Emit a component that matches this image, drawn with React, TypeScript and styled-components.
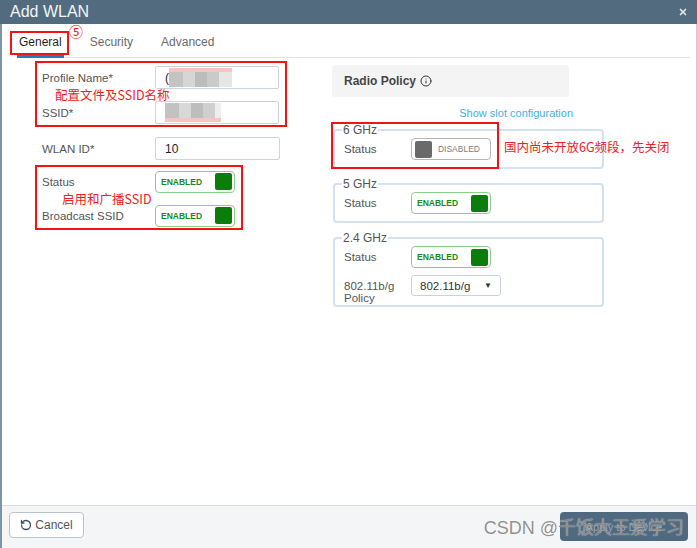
import React from "react";
import styled, { createGlobalStyle } from "styled-components";
import { RotateCcw, X, Info } from "lucide-react";

const Global = createGlobalStyle`
  html, body { margin: 0; padding: 0; background: #fff; }
  body { font-family: "Liberation Sans", Arial, "Noto Sans CJK SC", sans-serif; }
  * { box-sizing: border-box; }
`;

const Dialog = styled.div`
  width: 697px;
  height: 548px;
  display: flex;
  flex-direction: column;
  position: relative;
  overflow: hidden;
`;

const Header = styled.div`
  height: 24px;
  flex: none;
  background: #526b7e;
  display: flex;
  align-items: center;
  justify-content: space-between;
  padding: 0 9px 0 10px;
  color: #f2f5f7;
  font-size: 16px;
`;

const CloseBtn = styled.span`
  display: flex;
  align-items: center;
  color: #e4e9ed;
`;

const Frame = styled.div`
  flex: 1;
  display: flex;
  flex-direction: column;
  border-left: 2px solid #7e94a9;
  border-right: 1px solid #c6cfd8;
  min-height: 0;
`;

const Body = styled.div`
  flex: 1;
  padding: 0 6px 0 15px;
`;

const Tabs = styled.div`
  height: 34px;
  display: flex;
  gap: 24px;
  border-bottom: 1px solid #dde2e6;
`;

const Tab = styled.div<{ $active?: boolean }>`
  position: relative;
  height: 34px;
  padding: 4px 2px 0;
  display: flex;
  align-items: center;
  font-size: 12px;
  color: ${(p) => (p.$active ? "#1f1f1f" : "#6a6a6a")};
  border-bottom: 3px solid ${(p) => (p.$active ? "#1d7fc1" : "transparent")};
  margin-bottom: -1px;
`;

const TabMark = styled.div`
  position: absolute;
  left: -7px;
  top: 7px;
  width: 59px;
  height: 24px;
  border: 2px solid #f01414;
`;

const Circled = styled.span`
  position: absolute;
  left: 52px;
  top: -1px;
  font-family: "Noto Sans CJK SC", "DejaVu Sans", sans-serif;
  font-size: 14px;
  line-height: 16px;
  color: #f01414;
`;

const Columns = styled.div`
  display: flex;
  padding-top: 3px;
`;

const LeftCol = styled.div`
  margin-left: 18px;
  width: 252px;
  display: flex;
  flex-direction: column;
`;

const RedBox = styled.div<{ $w: number; $top?: number }>`
  width: ${(p) => p.$w}px;
  margin-top: ${(p) => p.$top ?? 0}px;
  border: 2px solid #f01414;
  padding: 3px 6px 1px 5px;
`;

const Row = styled.div<{ $indent?: number; $top?: number }>`
  display: flex;
  align-items: center;
  height: 23px;
  margin-top: ${(p) => p.$top ?? 0}px;
  padding-left: ${(p) => p.$indent ?? 0}px;
`;

const Label = styled.div<{ $w?: number }>`
  width: ${(p) => p.$w ?? 113}px;
  flex: none;
  font-size: 11.5px;
  color: #555;
`;

const Note = styled.div<{ $h: number; $indent: number }>`
  height: ${(p) => p.$h}px;
  line-height: ${(p) => p.$h}px;
  padding-left: ${(p) => p.$indent}px;
  font-family: "Noto Sans CJK SC", sans-serif;
  font-size: 12.5px;
  color: #f02020;
  white-space: nowrap;
`;

const TextBox = styled.div`
  width: 125px;
  height: 23px;
  border: 1px solid #c9d6e0;
  border-radius: 2px;
  display: flex;
  align-items: center;
  padding-left: 9px;
  font-size: 12px;
  color: #222;
`;

const Mosaic = styled.div<{ $pink: "top" | "bottom" }>`
  display: flex;
  height: 19px;
  border-${(p) => p.$pink}: 4px solid #f7c3c3;
`;

const Tile = styled.span<{ $c: string; $w: number }>`
  display: block;
  width: ${(p) => p.$w}px;
  height: 100%;
  background: ${(p) => p.$c};
`;

const Toggle = styled.div<{ $on: boolean }>`
  width: 80px;
  height: 22px;
  border: 1.5px solid ${(p) => (p.$on ? "#8ccf8c" : "#b6b6b6")};
  border-radius: 4px;
  display: flex;
  align-items: center;
  flex-direction: ${(p) => (p.$on ? "row" : "row-reverse")};
  justify-content: space-between;
  padding: 0 2px 0 ${(p) => (p.$on ? 5 : 3)}px;
  background: #fff;
`;

const ToggleText = styled.span<{ $on: boolean }>`
  font-size: 8.5px;
  font-weight: ${(p) => (p.$on ? 700 : 400)};
  color: ${(p) => (p.$on ? "#1a8a1a" : "#7e7e7e")};
  margin-right: ${(p) => (p.$on ? 0 : 8)}px;
`;

const Knob = styled.span<{ $on: boolean }>`
  width: 17px;
  height: 17px;
  border-radius: 2px;
  background: ${(p) => (p.$on ? "#0a7d0a" : "#6a6a6a")};
`;

const RightCol = styled.div`
  margin-left: 44px;
  width: 275px;
  padding-top: 4px;
  display: flex;
  flex-direction: column;
`;

const PolicyBox = styled.div`
  margin-left: 1px;
  width: 237px;
  height: 32px;
  background: #f4f4f4;
  border-radius: 3px;
  display: flex;
  align-items: center;
  gap: 4px;
  padding-left: 12px;
  font-size: 12px;
  font-weight: 700;
  color: #454545;
`;

const SlotLink = styled.div`
  width: 242px;
  margin-top: 8px;
  height: 16px;
  line-height: 16px;
  text-align: right;
  font-size: 11px;
  color: #44afdd;
`;

const Group = styled.div<{ $top: number }>`
  position: relative;
  margin: ${(p) => p.$top}px 0 0 2px;
`;

const Band = styled.fieldset<{ $pb?: number }>`
  width: 271px;
  margin: 0 0 8px 0;
  border: 2px solid #d4e1ee;
  border-radius: 4px;
  padding: 0 9px ${(p) => p.$pb ?? 7}px 9px;
  min-width: 0;
`;

const Legend = styled.legend`
  margin-left: -2px;
  padding: 0 1px;
  font-size: 12px;
  line-height: 14px;
  color: #555;
`;

const BandRow = styled.div<{ $top?: number; $h?: number }>`
  display: flex;
  align-items: center;
  height: ${(p) => p.$h ?? 22}px;
  margin-top: ${(p) => p.$top ?? 1}px;
`;

const TwoLineLabel = styled.div`
  width: 67px;
  flex: none;
  align-self: flex-start;
  padding-top: 5px;
  font-size: 11.5px;
  line-height: 12px;
  height: 21px;
  color: #555;
`;

const Select = styled.div`
  width: 90px;
  height: 21px;
  border: 1px solid #c8d2dc;
  border-radius: 3px;
  display: flex;
  align-items: center;
  justify-content: space-between;
  padding: 0 8px 0 8px;
  font-size: 11.5px;
  color: #333;
`;

const Caret = styled.span`
  font-size: 8px;
  color: #333;
`;

const BandMark = styled.div`
  position: absolute;
  left: -2px;
  top: -1px;
  width: 168px;
  height: 47px;
  border: 2px solid #f01414;
`;

const BandNote = styled.div`
  position: absolute;
  left: 171px;
  top: 16px;
  line-height: 16px;
  font-family: "Noto Sans CJK SC", sans-serif;
  font-size: 12.5px;
  color: #f02020;
  white-space: nowrap;
`;

const Footer = styled.div`
  height: 43px;
  flex: none;
  border-top: 1px solid #d6dbe0;
  background: #f4f5f6;
  display: flex;
  align-items: flex-start;
  justify-content: space-between;
  padding: 6px 8px 0 7px;
`;

const CancelBtn = styled.div`
  width: 75px;
  height: 26px;
  border: 1px solid #b9c4cd;
  border-radius: 4px;
  background: #fff;
  display: flex;
  align-items: center;
  justify-content: center;
  gap: 3px;
  font-size: 12px;
  color: #555;
`;

const ApplyBtn = styled.div`
  width: 128px;
  height: 29px;
  border-radius: 4px;
  background: #4f6a80;
  display: flex;
  align-items: center;
  justify-content: center;
  font-size: 11px;
  color: rgba(255, 255, 255, 0.4);
`;

const Watermark = styled.div`
  position: absolute;
  right: 13px;
  bottom: 9px;
  font-family: "Liberation Sans", "Noto Sans CJK SC", sans-serif;
  font-size: 18px;
  line-height: 22px;
  color: rgba(125, 125, 125, 0.85);
  text-shadow: 0 0 1px rgba(255, 255, 255, 0.8);
  white-space: nowrap;
`;

const SwitchCtl = ({ on }: { on: boolean }) => (
  <Toggle $on={on}>
    <ToggleText $on={on}>{on ? "ENABLED" : "DISABLED"}</ToggleText>
    <Knob $on={on} />
  </Toggle>
);

const tilesA = [
  ["#c4c4c4", 14],
  ["#d6d6d6", 12],
  ["#bcbcbc", 12],
  ["#cacaca", 12],
  ["#e6e6e6", 13],
] as const;

const tilesB = [
  ["#c2c2c2", 14],
  ["#d8d8d8", 12],
  ["#bdbdbd", 12],
  ["#cfcfcf", 12],
  ["#eeeeee", 6],
] as const;

export default function App() {
  return (
    <Dialog>
      <Global />
      <Header>
        <span>Add WLAN</span>
        <CloseBtn>
          <X size={10} strokeWidth={4} />
        </CloseBtn>
      </Header>
      <Frame>
        <Body>
          <Tabs>
            <Tab $active>
              General
              <TabMark />
              <Circled>⑤</Circled>
            </Tab>
            <Tab>Security</Tab>
            <Tab>Advanced</Tab>
          </Tabs>
          <Columns>
            <LeftCol>
              <RedBox $w={252}>
                <Row>
                  <Label>Profile Name*</Label>
                  <TextBox>
                    (
                    <Mosaic $pink="top">
                      {tilesA.map(([c, w], i) => (
                        <Tile key={i} $c={c} $w={w} />
                      ))}
                    </Mosaic>
                  </TextBox>
                </Row>
                <Note $h={12} $indent={13}>配置文件及SSID名称</Note>
                <Row>
                  <Label>SSID*</Label>
                  <TextBox>
                    <Mosaic $pink="bottom">
                      {tilesB.map(([c, w], i) => (
                        <Tile key={i} $c={c} $w={w} />
                      ))}
                    </Mosaic>
                  </TextBox>
                </Row>
              </RedBox>
              <Row $indent={7} $top={10}>
                <Label>WLAN ID*</Label>
                <TextBox>10</TextBox>
              </Row>
              <RedBox $w={208} $top={5}>
                <Row>
                  <Label>Status</Label>
                  <SwitchCtl on />
                </Row>
                <Note $h={11} $indent={20}>启用和广播SSID</Note>
                <Row>
                  <Label>Broadcast SSID</Label>
                  <SwitchCtl on />
                </Row>
              </RedBox>
            </LeftCol>
            <RightCol>
              <PolicyBox>
                Radio Policy
                <Info size={12} strokeWidth={2} color="#333" />
              </PolicyBox>
              <SlotLink>Show slot configuration</SlotLink>
              <Group $top={2}>
                <Band>
                  <Legend>6 GHz</Legend>
                  <BandRow>
                    <Label $w={67}>Status</Label>
                    <SwitchCtl on={false} />
                  </BandRow>
                </Band>
                <BandMark />
                <BandNote>国内尚未开放6G频段，先关闭</BandNote>
              </Group>
              <Group $top={0}>
                <Band>
                  <Legend>5 GHz</Legend>
                  <BandRow>
                    <Label $w={67}>Status</Label>
                    <SwitchCtl on />
                  </BandRow>
                </Band>
                <Band $pb={9}>
                  <Legend>2.4 GHz</Legend>
                  <BandRow>
                    <Label $w={67}>Status</Label>
                    <SwitchCtl on />
                  </BandRow>
                  <BandRow $top={7} $h={21}>
                    <TwoLineLabel>
                      802.11b/g
                      <br />
                      Policy
                    </TwoLineLabel>
                    <Select>
                      802.11b/g
                      <Caret>▼</Caret>
                    </Select>
                  </BandRow>
                </Band>
              </Group>
            </RightCol>
          </Columns>
        </Body>
        <Footer>
          <CancelBtn>
            <RotateCcw size={12} strokeWidth={2.6} color="#3b4e5e" />
            Cancel
          </CancelBtn>
          <ApplyBtn>Apply to Device</ApplyBtn>
        </Footer>
      </Frame>
      <Watermark>CSDN @千饭大王爱学习</Watermark>
    </Dialog>
  );
}
